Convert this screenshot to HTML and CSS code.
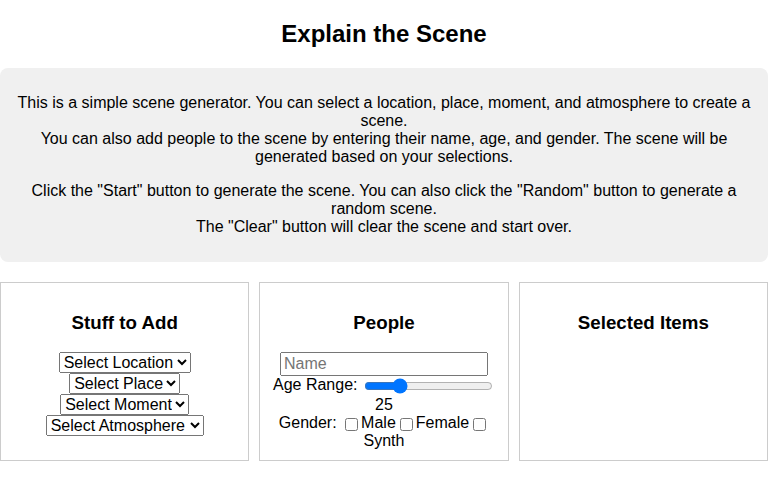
FILE: index.html
```html
<!DOCTYPE html>
<html lang="en">
<head>
    <meta charset="UTF-8">
    <meta name="viewport" content="width=device-width, initial-scale=1.0">
    <title>Explain the Scene</title>
    <link rel="stylesheet" href="styles.css">
</head>
<body>
    <h1 class="title">Explain the Scene</h1>

    <div class="intro">
        <p>This is a simple scene generator. You can select a location, place, moment, and atmosphere to create a scene.<br>
        You can also add people to the scene by entering their name, age, and gender. The scene will be generated based on your selections.</p>
        <p>Click the "Start" button to generate the scene. You can also click the "Random" button to generate a random scene.<br>
        The "Clear" button will clear the scene and start over.</p>
    </div>

    <div class="panels">
        <div class="panel">
            <h3>Stuff to Add</h3>
            <select id="location"><option>Select Location</option></select><br>
            <select id="place"><option>Select Place</option></select><br>
            <select id="moment"><option>Select Moment</option></select><br>
            <select id="atmosphere"><option>Select Atmosphere</option></select>
        </div>

        <div class="panel">
            <h3>People</h3>
            <input type="text" id="name" placeholder="Name"><br>
            <label for="age">Age Range:</label>
            <input type="range" id="age" min="0" max="100" value="25">
            <span id="ageValue">25</span><br>
            Gender: <input type="checkbox" id="male"><label for="male">Male</label><input type="checkbox" id="female"><label for="female">Female</label><input type="checkbox" id="synth"> <label for="synth">Synth</label>
        </div>

        <div class="panel">
            <h3>Selected Items</h3>
            <div id="selected"></div>
        </div>
    </div>
</body>
</html>
```

FILE: styles.css
```css
body {
    margin: 0;
    font-family: 'Liberation Sans', Arial, sans-serif;
    font-size: 16px;
    color: #000;
}

.title {
    font-size: 24px;
    text-align: center;
    margin: 20px 0;
}

.intro {
    background: #f0f0f0;
    border-radius: 8px;
    padding: 10px;
    text-align: center;
}

.panels {
    display: flex;
    gap: 10px;
    margin-top: 20px;
}

.panel {
    flex: 1;
    border: 1px solid #ccc;
    padding: 10px;
    text-align: center;
}

.panel h3 {
    font-size: 18.72px;
    margin: 18.72px 0;
}

select,
input[type="text"] {
    font-family: inherit;
    font-size: 16px;
}

input[type="text"] {
    width: 200px;
}

input[type="range"] {
    vertical-align: middle;
}

input[type="checkbox"] {
    vertical-align: middle;
    margin-top: 0;
    margin-bottom: 0;
}
```
